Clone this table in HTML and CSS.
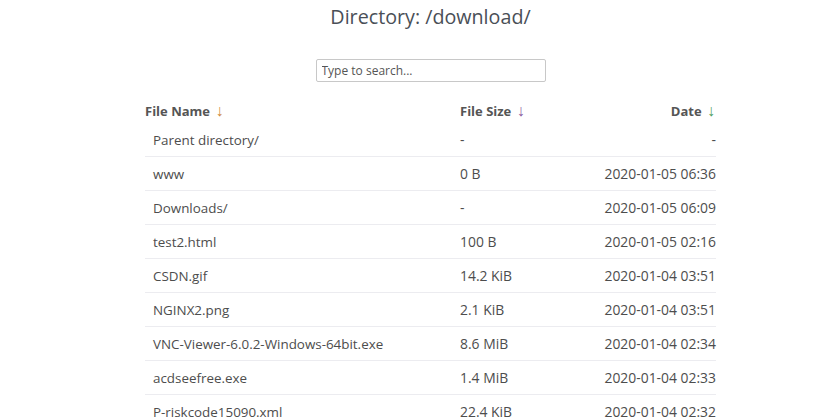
FILE: index.html
```html
<!DOCTYPE html>
<html>
<head>
<meta charset="utf-8">
<link rel="stylesheet" href="styles.css">
</head>
<body>
<div class="wrap">
  <h1 class="title">Directory: /download/</h1>
  <div class="search-row">
    <input class="search" type="text" placeholder="Type to search...">
  </div>
  <table class="list">
    <colgroup><col class="c-name"><col class="c-size"><col class="c-date"></colgroup>
    <thead>
      <tr>
        <th class="h-name">File Name <span class="arrow a1">↓</span></th>
        <th class="h-size">File Size <span class="arrow a2">↓</span></th>
        <th class="h-date">Date <span class="arrow a3">↓</span></th>
      </tr>
    </thead>
    <tbody>
      <tr><td class="name">Parent directory/</td><td class="size">-</td><td class="date">-</td></tr>
      <tr><td class="name">www</td><td class="size">0 B</td><td class="date">2020-01-05 06:36</td></tr>
      <tr><td class="name">Downloads/</td><td class="size">-</td><td class="date">2020-01-05 06:09</td></tr>
      <tr><td class="name">test2.html</td><td class="size">100 B</td><td class="date">2020-01-05 02:16</td></tr>
      <tr><td class="name">CSDN.gif</td><td class="size">14.2 KiB</td><td class="date">2020-01-04 03:51</td></tr>
      <tr><td class="name">NGINX2.png</td><td class="size">2.1 KiB</td><td class="date">2020-01-04 03:51</td></tr>
      <tr><td class="name">VNC-Viewer-6.0.2-Windows-64bit.exe</td><td class="size">8.6 MiB</td><td class="date">2020-01-04 02:34</td></tr>
      <tr><td class="name">acdseefree.exe</td><td class="size">1.4 MiB</td><td class="date">2020-01-04 02:33</td></tr>
      <tr><td class="name">P-riskcode15090.xml</td><td class="size">22.4 KiB</td><td class="date">2020-01-04 02:32</td></tr>
    </tbody>
  </table>
</div>
</body>
</html>
```
FILE: styles.css
```css
html, body {
  margin: 0;
  padding: 0;
  background: #fff;
}
body {
  font-family: "Open Sans", "Noto Sans", sans-serif;
  color: #4d4d4d;
  font-size: 13.9px;
}
.wrap {
  width: 571px;
  margin-left: 145px;
}
.title {
  margin: 0;
  padding-top: 3px;
  text-align: center;
  font-size: 19.7px;
  font-weight: normal;
  line-height: 28px;
  color: #4a4f57;
}
.search-row {
  display: flex;
  justify-content: center;
  margin-top: 28px;
}
.search {
  box-sizing: border-box;
  width: 230px;
  height: 23px;
  border: 1px solid #c8c8c8;
  border-radius: 2px;
  padding: 0 5px;
  font-family: "Open Sans", "Noto Sans", sans-serif;
  font-size: 12px;
  color: #444;
  outline: none;
}
.search::placeholder {
  color: #555;
}
.list {
  width: 571px;
  border-collapse: collapse;
  margin-top: 17px;
}
.c-name { width: 315px; }
.c-size { width: 130px; }
th {
  font-weight: bold;
  font-size: 13px;
  color: #555;
  text-align: left;
  padding: 0;
  height: 24px;
  line-height: 24px;
}
.h-date { text-align: right; padding-right: 1px; }
.arrow {
  font-weight: normal;
  margin-left: 2px;
  font-size: 16px;
  line-height: 16px;
}
.a1 { color: #d08a40; }
.a2 { color: #8a5aa0; }
.a3 { color: #50a060; }
td {
  height: 33px;
  padding: 0;
  border-bottom: 1px solid #ececf0;
  white-space: nowrap;
}
tbody tr:last-child td { border-bottom: none; }
.name { padding-left: 8px; font-size: 13.4px; }
.date { text-align: right; }
```
